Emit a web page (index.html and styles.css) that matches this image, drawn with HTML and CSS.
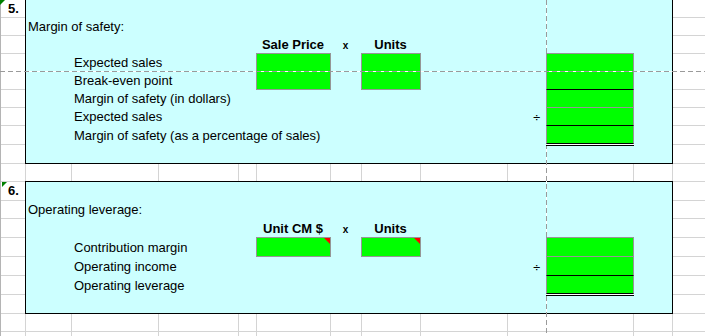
FILE: index.html
```html
<!DOCTYPE html>
<html>
<head>
<meta charset="utf-8">
<link rel="stylesheet" href="styles.css">
</head>
<body>
<div class="sheet">
  <div class="panel panel-top"></div>
  <div class="panel panel-bottom"></div>

  <div class="num r0">5.<span class="flag flag-first"></span></div>
  <div class="txt label r1">Margin of safety:</div>
  <div class="txt head cf r2">Sale Price</div>
  <div class="txt op cg r2"><span class="mul">x</span></div>
  <div class="txt head ch r2">Units</div>
  <div class="txt item r3">Expected sales</div>
  <div class="txt item r4">Break-even point</div>
  <div class="txt item r5">Margin of safety (in dollars)</div>
  <div class="txt item r6">Expected sales</div>
  <div class="txt item r7">Margin of safety (as a percentage of sales)</div>
  <div class="input cf span34"></div>
  <div class="input ch span34"></div>
  <div class="txt divop cj r6"><span class="divsign">÷</span></div>
  <div class="res res-first ck span34"></div>
  <div class="res top-black ck r5"></div>
  <div class="res top-gray ck r6"></div>
  <div class="res res-total ck r7"></div>

  <div class="num r10">6.<span class="flag flag-second"></span></div>
  <div class="txt label r11">Operating leverage:</div>
  <div class="txt head cf r12">Unit CM $</div>
  <div class="txt op cg r12"><span class="mul">x</span></div>
  <div class="txt head ch r12">Units</div>
  <div class="txt item r13">Contribution margin</div>
  <div class="txt item r14">Operating income</div>
  <div class="txt item r15">Operating leverage</div>
  <div class="input input-short cf r13"><span class="note"></span></div>
  <div class="input input-short ch r13"><span class="note"></span></div>
  <div class="txt divop cj r14"><span class="divsign">÷</span></div>
  <div class="res res-first ck r13"></div>
  <div class="res top-gray ck r14"></div>
  <div class="res res-total top-black ck r15"></div>

  <div class="vbreak"></div>
  <div class="hbreak"></div>
</div>
</body>
</html>
```

FILE: styles.css
```css
html, body {
  margin: 0;
  padding: 0;
  background: #fff;
}

.sheet {
  --gl: linear-gradient(#d4d4d4, #d4d4d4);
  position: relative;
  width: 705px;
  height: 336px;
  overflow: hidden;
  display: grid;
  grid-template-columns: 25px 46px 87px 80px 18px 74px 31px 59px 87px 39px 87px 39px 33px;
  grid-template-rows: 17px 18px 18px 18px 18px 18px 18px 19px 19px 18px 19px 18px 19px 19px 19px 19px 19px 18px 5px;
  font-family: "Liberation Sans", Arial, sans-serif;
  font-size: 13px;
  color: #000;
  background-color: #fff;
  background-image:
    linear-gradient(#b4b4b4, #b4b4b4),
    var(--gl), var(--gl), var(--gl), var(--gl), var(--gl), var(--gl),
    var(--gl), var(--gl), var(--gl), var(--gl), var(--gl),
    var(--gl), var(--gl), var(--gl), var(--gl), var(--gl), var(--gl),
    var(--gl), var(--gl), var(--gl), var(--gl), var(--gl), var(--gl),
    var(--gl), var(--gl), var(--gl), var(--gl), var(--gl);
  background-repeat: no-repeat;
  background-size:
    1px 100%,
    1px 100%, 1px 100%, 1px 100%, 1px 100%, 1px 100%, 1px 100%,
    1px 100%, 1px 100%, 1px 100%, 1px 100%, 1px 100%,
    100% 1px, 100% 1px, 100% 1px, 100% 1px, 100% 1px, 100% 1px,
    100% 1px, 100% 1px, 100% 1px, 100% 1px, 100% 1px, 100% 1px,
    100% 1px, 100% 1px, 100% 1px, 100% 1px, 100% 1px;
  background-position:
    0 0,
    25px 0, 71px 0, 158px 0, 238px 0, 256px 0, 330px 0,
    361px 0, 420px 0, 507px 0, 633px 0, 672px 0,
    0 17px, 0 35px, 0 53px, 0 89px, 0 107px, 0 125px,
    0 144px, 0 163px, 0 181px, 0 200px, 0 218px, 0 237px,
    0 256px, 0 275px, 0 294px, 0 313px, 0 331px;
}

/* rows */
.r0 { grid-row: 1; }
.r1 { grid-row: 2; }
.r2 { grid-row: 3; }
.r3 { grid-row: 4; }
.r4 { grid-row: 5; }
.r5 { grid-row: 6; }
.r6 { grid-row: 7; }
.r7 { grid-row: 8; }
.span34 { grid-row: 4 / 6; }
.r10 { grid-row: 11; }
.r11 { grid-row: 12; }
.r12 { grid-row: 13; }
.r13 { grid-row: 14; }
.r14 { grid-row: 15; }
.r15 { grid-row: 16; }

/* columns */
.cf { grid-column: 6; }
.cg { grid-column: 7; }
.ch { grid-column: 8; }
.cj { grid-column: 10; }
.ck { grid-column: 11; }

/* section panels */
.panel {
  grid-column: 2 / 13;
  background: #ccffff;
  border: 1px solid #000;
  margin: 0 -1px -1px 0;
}
.panel-top {
  grid-row: 1 / 10;
  border-top: none;
}
.panel-bottom {
  grid-row: 11 / 18;
}

/* section numbers */
.num {
  grid-column: 1;
  position: relative;
  display: flex;
  align-items: center;
  justify-content: center;
  padding-left: 2px;
  font-weight: bold;
  font-size: 13px;
}
.flag {
  position: absolute;
  width: 5px;
  height: 5px;
  background: #008000;
  clip-path: polygon(0 0, 100% 0, 0 100%);
}
.flag-first { left: 0; top: 0; }
.flag-second { left: 2px; top: 1px; }

/* text cells */
.txt {
  display: flex;
  align-items: flex-end;
  line-height: 15px;
  padding-bottom: 1.5px;
  white-space: nowrap;
}
.label {
  grid-column: 2 / 6;
  padding-left: 3px;
}
.item {
  grid-column: 3 / 7;
  padding-left: 3px;
}
.head {
  justify-content: center;
  font-weight: bold;
}
.op {
  justify-content: center;
}
.mul {
  font-size: 10px;
  font-weight: bold;
  line-height: 12px;
}
.divop {
  justify-content: flex-end;
  padding-right: 5px;
  padding-bottom: 0;
}
.divsign {
  font-family: "DejaVu Sans", sans-serif;
  font-size: 10px;
  line-height: 14px;
}

/* input boxes */
.input {
  position: relative;
  z-index: 2;
  background: #00ff00;
  border: 1px solid #969696;
  margin: 0 -1px -1px 0;
}
.note {
  position: absolute;
  right: 0;
  top: 0;
  width: 6px;
  height: 6px;
  background: #ff0000;
  clip-path: polygon(0 0, 100% 0, 100% 100%);
}

/* result column */
.res {
  z-index: 2;
  background: #00ff00;
  border-left: 1px solid #969696;
  border-right: 1px solid #969696;
  margin-right: -1px;
}
.res-first { border-top: 1px solid #969696; }
.top-black { border-top: 1px solid #000; }
.top-gray { border-top: 1px solid #969696; }
.res-total {
  border-top: 1px solid #000;
  border-bottom: 1px solid #000;
  box-shadow: 0 1px 0 #fff, 0 2px 0 #000;
}

/* page break lines */
.vbreak {
  position: absolute;
  left: 546px;
  top: 0;
  width: 1px;
  height: 100%;
  z-index: 1;
  background: repeating-linear-gradient(to bottom, #9a9a9a 0 5px, #fff 5px 8px);
}
.hbreak {
  position: absolute;
  left: 0;
  top: 71px;
  width: 100%;
  height: 1px;
  z-index: 3;
  background: repeating-linear-gradient(to right, #9a9a9a 0 5px, #fff 5px 8px);
}
```
